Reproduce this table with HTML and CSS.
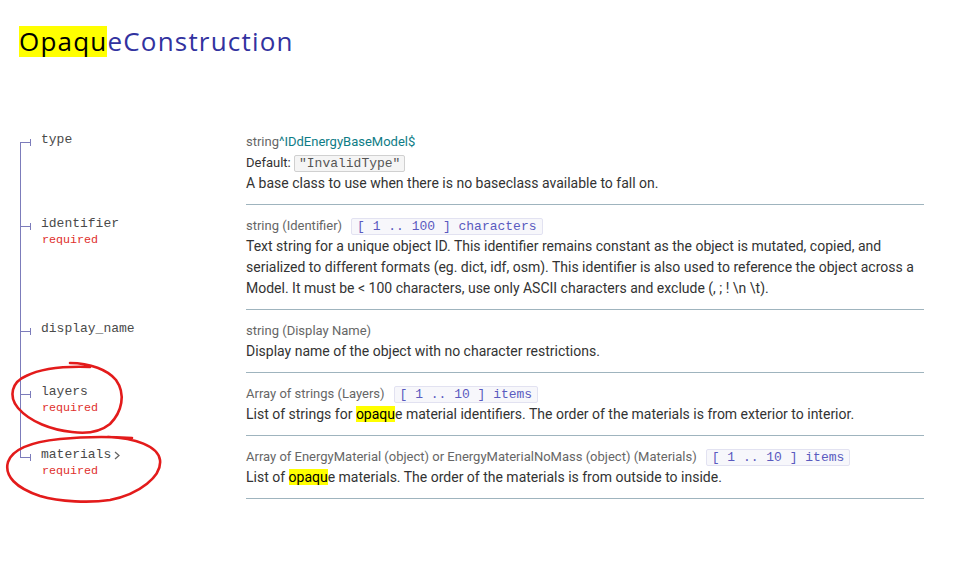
FILE: index.html
```html
<!DOCTYPE html>
<html lang="en">
<head>
<meta charset="utf-8">
<title>OpaqueConstruction</title>
<link rel="stylesheet" href="styles.css">
</head>
<body>
<div class="page">
  <h1 class="title"><mark class="hl-title">Opaqu</mark>eConstruction</h1>
  <div class="props">
    <div class="prop first">
      <div class="name-cell">
        <div class="name-line"><span class="tick"></span><span class="name">type</span></div>
      </div>
      <div class="detail">
        <div class="type-line"><span class="type">string</span><span class="pattern">^IDdEnergyBaseModel$</span></div>
        <div class="default-line">Default: <span class="value">"InvalidType"</span></div>
        <p class="desc">A base class to use when there is no baseclass available to fall on.</p>
      </div>
    </div>
    <div class="prop">
      <div class="name-cell">
        <div class="name-line"><span class="tick"></span><span class="name">identifier</span></div>
        <span class="required">required</span>
      </div>
      <div class="detail">
        <div class="type-line"><span class="type">string (Identifier)</span><span class="badge">[ 1 .. 100 ] characters</span></div>
        <p class="desc">Text string for a unique object ID. This identifier remains constant as the object is mutated, copied, and serialized to different formats (eg. dict, idf, osm). This identifier is also used to reference the object across a Model. It must be &lt; 100 characters, use only ASCII characters and exclude (, ; ! \n \t).</p>
      </div>
    </div>
    <div class="prop">
      <div class="name-cell">
        <div class="name-line"><span class="tick"></span><span class="name">display_name</span></div>
      </div>
      <div class="detail">
        <div class="type-line"><span class="type">string (Display Name)</span></div>
        <p class="desc">Display name of the object with no character restrictions.</p>
      </div>
    </div>
    <div class="prop">
      <div class="name-cell">
        <div class="name-line"><span class="tick"></span><span class="name">layers</span></div>
        <span class="required">required</span>
      </div>
      <div class="detail">
        <div class="type-line"><span class="type">Array of strings (Layers)</span><span class="badge">[ 1 .. 10 ] items</span></div>
        <p class="desc">List of strings for <mark class="hl">opaqu</mark>e material identifiers. The order of the materials is from exterior to interior.</p>
      </div>
    </div>
    <div class="prop last">
      <div class="name-cell">
        <div class="name-line"><span class="tick"></span><span class="name">materials</span><svg class="chevron" width="6" height="9" viewBox="0 0 6 9"><path d="M1 1 L5 4.5 L1 8" fill="none" stroke="#666" stroke-width="1.3"/></svg></div>
        <span class="required">required</span>
      </div>
      <div class="detail">
        <div class="type-line"><span class="type">Array of EnergyMaterial (object) or EnergyMaterialNoMass (object) (Materials)</span><span class="badge">[ 1 .. 10 ] items</span></div>
        <p class="desc">List of <mark class="hl">opaqu</mark>e materials. The order of the materials is from outside to inside.</p>
      </div>
    </div>
  </div>
</div>
<svg class="annotations" width="955" height="568" viewBox="0 0 955 568">
  <path d="M70 363 C90 363 108 370 116 380 C126 394 122 412 110 424 C100 432 86 434 72 432 C52 430 30 422 18 408 C8 396 12 382 26 376 C42 368 62 366 90 367" />
  <path d="M108 437 C135 438 158 446 160 460 C162 476 140 494 110 500 C90 503 60 502 40 496 C16 488 4 476 8 462 C12 450 30 442 60 439 C80 437 100 436 132 438" />
</svg>
</body>
</html>
```
FILE: styles.css
```css
* { box-sizing: border-box; }

body {
  margin: 0;
  background: #fff;
  font-family: Roboto, "Liberation Sans", sans-serif;
  color: #333;
}

.title {
  margin: 0;
  padding: 26px 0 0 19px;
  font-family: "Open Sans", sans-serif;
  font-weight: 400;
  font-size: 26px;
  line-height: 31px;
  letter-spacing: 1.2px;
  color: #32329f;
}

.hl-title {
  display: inline-block;
  background: #ff0;
  color: #000;
  line-height: 31px;
}

.props {
  margin: 64px 0 0 20px;
  width: 904px;
}

.prop {
  display: grid;
  grid-template-columns: 226px 678px;
}

.name-cell {
  padding: 9px 10px 0 1px;
  background: linear-gradient(#7c7cbb, #7c7cbb) no-repeat 0 0 / 1px 100%;
}

.prop.first .name-cell { background-position: 0 21px; }
.prop.last .name-cell { background-size: 1px 22px; }

.name-line {
  display: flex;
  align-items: center;
  height: 20px;
}

.tick {
  align-self: flex-start;
  flex: none;
  width: 10px;
  height: 7px;
  margin: 9px 10px 0 0;
  background:
    linear-gradient(#7c7cbb, #7c7cbb) no-repeat 0 3px / 10px 1px,
    linear-gradient(#7c7cbb, #7c7cbb) no-repeat 9px 0 / 1px 7px;
}

.name {
  font-family: "Liberation Mono", monospace;
  font-size: 13px;
  line-height: 20px;
  color: #4a4a4a;
}

.chevron { margin-left: 3px; margin-top: 1px; }

.required {
  display: block;
  margin-left: 21px;
  font-family: "Liberation Mono", monospace;
  font-size: 11.7px;
  line-height: 12px;
  color: #e0302c;
}

.detail {
  padding: 10px 0;
  border-bottom: 1px solid #9fb4be;
}

.type-line {
  font-size: 13px;
  line-height: 21px;
  color: #666;
}

.pattern { color: #0e7c86; }

.badge {
  margin-left: 9px;
  padding: 0 5px;
  font-family: "Liberation Mono", monospace;
  font-size: 13px;
  line-height: 14px;
  color: #5a5abf;
  background: rgba(50, 50, 159, 0.04);
  border: 1px solid rgba(50, 50, 159, 0.1);
  border-radius: 2px;
}

.default-line {
  font-size: 13px;
  line-height: 21px;
  color: #333;
}

.value {
  padding: 0 4px;
  font-family: "Liberation Mono", monospace;
  font-size: 13px;
  line-height: 14px;
  color: #555;
  background: rgba(51, 51, 51, 0.05);
  border: 1px solid rgba(0, 0, 0, 0.15);
  border-radius: 2px;
}

.desc {
  margin: 0;
  font-size: 14px;
  line-height: 21px;
  color: #333;
}

.hl {
  background: #ff0;
  color: #000;
}

.annotations {
  position: absolute;
  left: 0;
  top: 0;
  pointer-events: none;
}

.annotations path {
  fill: none;
  stroke: #e31b1b;
  stroke-width: 2.6;
  stroke-linecap: round;
  stroke-linejoin: round;
}
```
